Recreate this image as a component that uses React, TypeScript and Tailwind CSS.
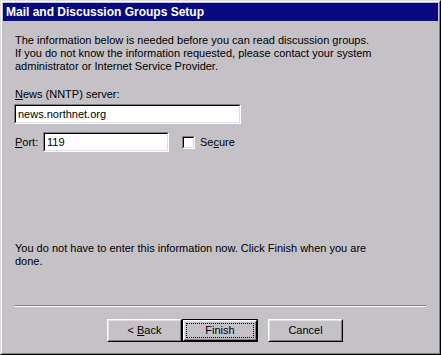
import React from 'react';

const font = { fontFamily: '"Liberation Sans", Arial, sans-serif' };

function Button({ children, isDefault }: { children: React.ReactNode; isDefault?: boolean }) {
  if (isDefault) {
    return (
      <div className="w-[76px] h-[23px] border border-black">
        <div className="w-full h-full border border-t-white border-l-white border-b-black border-r-black">
          <div className="w-full h-full border border-t-[#dfdfdf] border-l-[#dfdfdf] border-b-[#808080] border-r-[#808080] p-[1px]">
            <div className="w-full h-full border border-dotted border-black flex items-center justify-center text-[11px] text-black">
              {children}
            </div>
          </div>
        </div>
      </div>
    );
  }
  return (
    <div className="w-[75px] h-[23px] border border-t-white border-l-white border-b-black border-r-black">
      <div className="w-full h-full border border-t-[#dfdfdf] border-l-[#dfdfdf] border-b-[#808080] border-r-[#808080] flex items-center justify-center text-[11px] text-black">
        {children}
      </div>
    </div>
  );
}

function Field({ value, width }: { value: string; width: string }) {
  return (
    <div className={`${width} h-[20px] border border-t-[#808080] border-l-[#808080] border-b-white border-r-white`}>
      <div className="w-full h-full border border-t-black border-l-black border-b-[#dfdfdf] border-r-[#dfdfdf] bg-white flex items-center px-[2px] text-[11px] text-black">
        {value}
      </div>
    </div>
  );
}

export default function App() {
  return (
    <div className="w-[441px] h-[355px] bg-[#c4c1c7]" style={font}>
      <div className="w-full h-full border border-t-[#dfdfdf] border-l-[#dfdfdf] border-b-black border-r-black">
        <div className="w-full h-full border border-t-white border-l-white border-b-[#808080] border-r-[#808080] p-[1px] flex flex-col">
          {/* title bar */}
          <div className="h-[18px] bg-[#0a0a80] flex items-center pl-[3px] text-white font-bold text-[12px]">
            Mail and Discussion Groups Setup
          </div>

          <div className="flex flex-col pl-[12px] pr-[10px] text-[11px] text-black leading-[13px]">
            <p className="mt-[13px]">
              The information below is needed before you can read discussion groups.
              <br />
              If you do not know the information requested, please contact your system
              <br />
              administrator or Internet Service Provider.
            </p>

            <p className="mt-[15px]">
              <span className="underline">N</span>ews (NNTP) server:
            </p>
            <div className="mt-[3px] -ml-[1px]">
              <Field value="news.northnet.org" width="w-[227px]" />
            </div>

            <div className="mt-[8px] flex items-center">
              <span className="w-[28px]">
                <span className="underline">P</span>ort:
              </span>
              <Field value="119" width="w-[126px]" />
              <div className="ml-[13px] w-[13px] h-[13px] border border-t-[#808080] border-l-[#808080] border-b-white border-r-white">
                <div className="w-full h-full border border-t-black border-l-black border-b-[#dfdfdf] border-r-[#dfdfdf] bg-white" />
              </div>
              <span className="ml-[5px]">
                Se<span className="underline">c</span>ure
              </span>
            </div>

            <p className="mt-[90px]">
              You do not have to enter this information now. Click Finish when you are
              <br />
              done.
            </p>

            <div className="mt-[37px] mr-[2px] h-[2px] border-t border-t-[#808080] border-b border-b-white" />

            <div className="mt-[12px] flex pl-[92px]">
              <Button>
                &lt; <span className="underline ml-[3px]">B</span>ack
              </Button>
              <Button isDefault>Finish</Button>
              <div className="ml-[10px]">
                <Button>Cancel</Button>
              </div>
            </div>
          </div>
        </div>
      </div>
    </div>
  );
}
